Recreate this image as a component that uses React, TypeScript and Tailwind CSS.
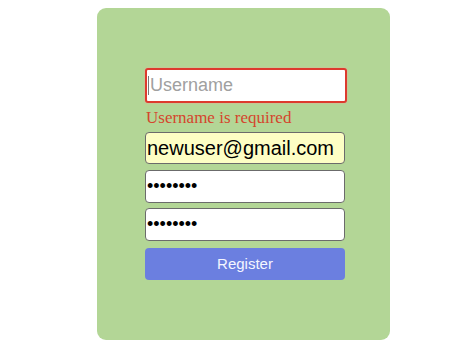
import React from "react";

export default function App() {
  return (
    <div className="w-[474px] h-[355px] bg-white pt-[8px] pl-[97px] font-['Liberation_Sans',Arial,sans-serif]">
      <div className="w-[293px] h-[332px] bg-[#b3d696] rounded-[9px] pt-[60px] pl-[48px] flex flex-col">
        <div className="relative w-[202px] h-[35px]">
          <input
            className="w-[202px] h-[35px] bg-white border-2 border-[#dd3a2e] rounded-[3px] pl-[3px] text-[18px] text-black placeholder:text-[#a0a0a0] outline-none shadow-[0_0_2px_#f3a59c]"
            placeholder="Username"
          />
          <span className="absolute left-[3px] top-[8px] w-px h-[19px] bg-[#777]" />
        </div>
        <div className="h-[29px] leading-[29px] text-[17px] text-[#d5452d] font-['Liberation_Serif','Times_New_Roman',serif] pl-[1px]">
          Username is required
        </div>
        <input
          className="w-[200px] h-[32px] bg-[#fdfec4] border border-[#6b6b6b] rounded-[4px] pl-[1px] text-[20px] text-black outline-none"
          defaultValue="newuser@gmail.com"
        />
        <input
          type="password"
          className="mt-[6px] w-[200px] h-[33px] bg-white border border-[#6b6b6b] rounded-[4px] pl-[1px] text-[18px] text-black outline-none"
          defaultValue="12345678"
        />
        <input
          type="password"
          className="mt-[5px] w-[200px] h-[33px] bg-white border border-[#6b6b6b] rounded-[4px] pl-[1px] text-[18px] text-black outline-none"
          defaultValue="12345678"
        />
        <button className="mt-[7px] w-[200px] h-[32px] bg-[#6b7fe0] rounded-[4px] text-[15px] text-[#f4f6ff]">
          Register
        </button>
      </div>
    </div>
  );
}
